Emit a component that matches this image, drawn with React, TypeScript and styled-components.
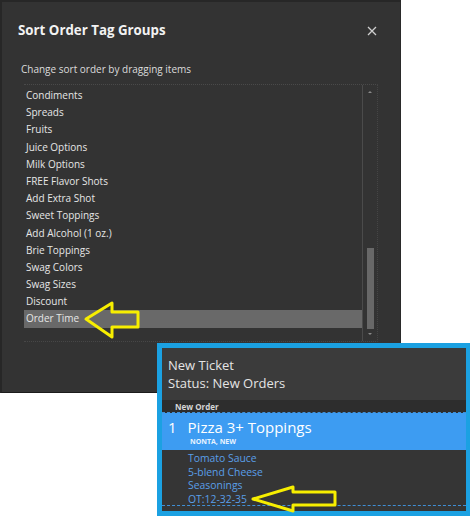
import React from "react";
import styled, { createGlobalStyle } from "styled-components";

const GlobalStyle = createGlobalStyle`
  html, body { margin: 0; padding: 0; background: #ffffff; }
  body { font-family: "Segoe UI", "Open Sans", "Noto Sans", sans-serif; }
  * { box-sizing: border-box; }
`;

const Page = styled.div`
  position: relative;
  width: 474px;
  height: 516px;
  overflow: hidden;
  background: #ffffff;
`;

const Dialog = styled.div`
  width: 401px;
  height: 393px;
  background: #333333;
  border-top: 2px solid #272727;
  border-left: 2px solid #272727;
  border-right: 1px solid #2a2a2a;
  border-bottom: 1px solid #1c1c1c;
  padding: 17px 24px 0 16px;
  display: flex;
  flex-direction: column;
`;

const TitleRow = styled.div`
  display: flex;
  align-items: center;
  justify-content: space-between;
  height: 22px;
`;

const Title = styled.div`
  font-family: "Open Sans", "Noto Sans", sans-serif;
  font-size: 13.3px;
  font-weight: 700;
  color: #f2f2f2;
`;

const CloseButton = styled.button`
  background: none;
  border: none;
  padding: 0;
  width: 10px;
  height: 10px;
  display: flex;
  margin-top: 1px;
  margin-right: -1px;
`;

const Subtitle = styled.div`
  margin-top: 21px;
  padding-left: 3px;
  font-family: "Open Sans", "Noto Sans", sans-serif;
  font-size: 10px;
  line-height: 14px;
  color: #dcdcdc;
`;

const ListBox = styled.div`
  margin-top: 8px;
  margin-left: 6px;
  width: 354px;
  height: 258px;
  display: flex;
  border-top: 1px dotted #4a4a4a;
  border-bottom: 1px dotted #474747;
  border-right: 1px dotted #454545;
`;

const Rows = styled.div`
  flex: 1;
  padding-top: 2px;
  border-right: 1px solid #4b4b4b;
`;

const Row = styled.div<{ $selected?: boolean }>`
  height: 17.2px;
  line-height: 17px;
  padding-left: 2px;
  font-family: "Open Sans", "Noto Sans", sans-serif;
  font-size: 10px;
  color: #e6e6e6;
  white-space: nowrap;
  background: ${(p) => (p.$selected ? "#696969" : "transparent")};
`;

const Scrollbar = styled.div`
  width: 14px;
  display: flex;
  flex-direction: column;
  align-items: center;
  padding: 6px 0 6px;
`;

const ScrollArrow = styled.div<{ $down?: boolean }>`
  width: 0;
  height: 0;
  border-left: 2px solid transparent;
  border-right: 2px solid transparent;
  ${(p) =>
    p.$down
      ? "border-top: 2px solid #8a8a8a;"
      : "border-bottom: 2px solid #8a8a8a;"}
`;

const Track = styled.div`
  flex: 1;
  width: 100%;
  display: flex;
  flex-direction: column;
  align-items: center;
  justify-content: flex-end;
  padding-bottom: 4px;
`;

const Thumb = styled.div`
  width: 7px;
  height: 81px;
  background: #686868;
`;

const Ticket = styled.div`
  position: absolute;
  left: 157px;
  top: 343px;
  width: 313px;
  height: 173px;
  border-top: 5px solid #1ba1e2;
  border-left: 5px solid #1ba1e2;
  border-right: 4px solid #1ba1e2;
  border-bottom: 5px solid #1ba1e2;
  background: #353535;
  display: flex;
  flex-direction: column;
  font-family: "Open Sans", "Noto Sans", sans-serif;
`;

const TicketHeader = styled.div`
  height: 52px;
  background: #3b3b3b;
  padding: 8px 0 0 6px;
  color: #e4e4e4;
  font-size: 13px;
  line-height: 18px;
`;

const OrderLabel = styled.div`
  height: 13px;
  background: #2d2d2d;
  padding-left: 13px;
  font-size: 8px;
  font-weight: 700;
  line-height: 13px;
  color: #d6d6d6;
  border-bottom: 1px dashed #3f8fd6;
`;

const OrderItem = styled.div`
  height: 37px;
  background: #3d9cf2;
  padding: 4px 0 0 6px;
  color: #ffffff;
`;

const ItemLine = styled.div`
  display: flex;
  align-items: baseline;
  gap: 11px;
  font-size: 15px;
  line-height: 20px;
`;

const ItemTags = styled.div`
  padding-left: 22px;
  font-size: 7px;
  font-weight: 700;
  line-height: 9px;
  color: #e8f3ff;
`;

const Modifiers = styled.div`
  padding: 2px 0 0 26px;
  border-bottom: 1px dashed #3f8fd6;
  height: 56px;
`;

const Modifier = styled.div`
  font-size: 10.4px;
  line-height: 13.6px;
  color: #5a9fe8;
`;

const Arrow = styled.svg`
  position: absolute;
  overflow: visible;
`;

const items = [
  "Condiments",
  "Spreads",
  "Fruits",
  "Juice Options",
  "Milk Options",
  "FREE Flavor Shots",
  "Add Extra Shot",
  "Sweet Toppings",
  "Add Alcohol (1 oz.)",
  "Brie Toppings",
  "Swag Colors",
  "Swag Sizes",
  "Discount",
  "Order Time",
];

const modifiers = ["Tomato Sauce", "5-blend Cheese", "Seasonings", "OT:12-32-35"];

export default function App() {
  return (
    <>
      <GlobalStyle />
      <Page>
        <Dialog>
          <TitleRow>
            <Title>Sort Order Tag Groups</Title>
            <CloseButton aria-label="close">
              <svg width="10" height="10" viewBox="0 0 10 10">
                <path d="M1 1 L9 9 M9 1 L1 9" stroke="#cfcfcf" strokeWidth="1.3" />
              </svg>
            </CloseButton>
          </TitleRow>
          <Subtitle>Change sort order by dragging items</Subtitle>
          <ListBox>
            <Rows>
              {items.map((it) => (
                <Row key={it} $selected={it === "Order Time"}>
                  {it}
                </Row>
              ))}
            </Rows>
            <Scrollbar>
              <ScrollArrow />
              <Track>
                <Thumb />
              </Track>
              <ScrollArrow $down />
            </Scrollbar>
          </ListBox>
        </Dialog>

        <Ticket>
          <TicketHeader>
            <div>New Ticket</div>
            <div>Status: New Orders</div>
          </TicketHeader>
          <OrderLabel>New Order</OrderLabel>
          <OrderItem>
            <ItemLine>
              <span>1</span>
              <span>Pizza 3+ Toppings</span>
            </ItemLine>
            <ItemTags>NONTA, NEW</ItemTags>
          </OrderItem>
          <Modifiers>
            {modifiers.map((m) => (
              <Modifier key={m}>{m}</Modifier>
            ))}
          </Modifiers>
        </Ticket>

        <Arrow style={{ left: 0, top: 0 }} width="1" height="1">
          <polygon
            points="86,319 112,303 112,312 138,312 138,327 112,327 112,337"
            fill="none"
            stroke="#f7ee00"
            strokeWidth="3"
            strokeLinejoin="round"
          />
          <polygon
            points="253,499 293,487 293,492 335,492 335,505 293,505 293,511"
            fill="none"
            stroke="#f7ee00"
            strokeWidth="3"
            strokeLinejoin="round"
          />
        </Arrow>
      </Page>
    </>
  );
}
